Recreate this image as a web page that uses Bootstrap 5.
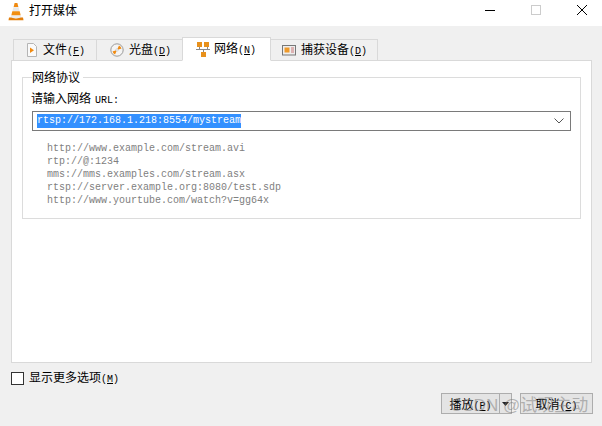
<!DOCTYPE html>
<html lang="zh">
<head>
<meta charset="utf-8">
<title>打开媒体</title>
<link rel="stylesheet" href="https://cdn.jsdelivr.net/npm/bootstrap@5.3.0/dist/css/bootstrap.min.css">
<style>
html,body{height:426px;overflow:hidden}
body{background:#f0f0f0;font-family:"Noto Sans CJK SC","Liberation Sans",sans-serif;font-size:12px;line-height:16px;color:#000;position:relative}
.mono{font-family:"Liberation Mono","Noto Sans CJK SC",monospace;font-size:10px}
.acc{text-decoration:underline}
.titlebar{height:26px;background:#fff;padding-bottom:6px}
.titlebar .ttl{margin-left:29px;font-size:12px}
.cone{position:absolute;left:8px;top:2px}
.winbtns{margin-right:-3px}
.winbtn{width:46px;height:20px}
.shell{padding:11px 10px 0 11px}
.tabbar{padding-left:2px;height:24px;border:0;margin-bottom:-1px;position:relative;z-index:1}
.tabbar .nav-link{height:22px;margin:2px 0 0 -1px;padding:0;border:1px solid #d9d9d9;border-radius:0;background:#f0f0f0;color:#000;font-size:12px;display:flex;align-items:center;gap:5px}
.tabbar .nav-item:first-child .nav-link{margin-left:0}
.tabbar .nav-link.active{height:24px;margin-top:0;background:#fff;border-color:#d9d9d9;border-bottom-color:#fff;z-index:2;position:relative;gap:4px}
.tabbar .t1{width:84px;padding-left:12px}
.tabbar .t2{width:87px;padding-left:13px}
.tabbar .t3{width:89px;padding-left:13px}
.tabbar .t4{width:108px;padding-left:11px}
.pane{height:303px;background:#fff;border:1px solid #d9d9d9;padding:8px 10px 0 10px}
.grp{height:150px;border:1px solid #dcdcdc;margin:0;padding:0 9px;min-width:0}
.grp legend{float:none;width:auto;font-size:12px;line-height:16px;margin:0;padding:0 3px 0 0;background:#fff;height:16px}
.urllabel{margin-top:5px;height:16px;margin-left:-1px}
.urlpart{margin-left:4px}
.combo{height:20px;border:1px solid #7a7a7a;margin:5px 0 0 0;padding:0 6px 0 4px;width:539px}
.sel{background:#3390ff;color:#fff;line-height:14px;height:14px;font-size:10px}
.ex{margin:11px 0 0 15px;color:#808080;line-height:13px}
.foot{margin-top:9px;height:13px;min-height:0;margin-bottom:0}
.cb{width:13px;height:13px;border:1px solid #333;background:#fff;border-radius:0;margin:0;flex:none;appearance:none;-webkit-appearance:none}
.gap-cb{gap:5px}
.actions{position:absolute;top:393px;left:441px;gap:8px}
.vbtn{height:21px;background:#e4e4e4;border:1px solid #adadad;border-radius:0;padding:0;font-size:12px;line-height:19px;color:#000;width:73px}
.vplay{width:71px;display:flex;padding:0}
.vplay .lbl{width:58px;text-align:center;border-right:1px solid #adadad}
.vplay .arr{flex:1;display:flex;align-items:center;justify-content:center}
.wmk{position:absolute;left:450px;top:396px;font-size:17px;line-height:20px;color:rgba(120,120,120,.5);white-space:nowrap;font-family:"Liberation Sans","Noto Sans CJK SC",sans-serif}
</style>
</head>
<body>
<div class="titlebar d-flex align-items-center justify-content-between">
  <svg class="cone" width="16" height="20" viewBox="0 0 16 20"><path d="M6.6 1h2.800l1 4H5.600z" fill="#f08a10"/><path d="M5.400 5.300h5.200l1 4H4.400z" fill="#e8e8e8"/><path d="M4.300 9.300h7.400l1 4.200H3.300z" fill="#f18f13"/><path d="M3.200 13.400h9.600l.8 2.600H2.400z" fill="#ececec"/><path d="M1 15.600h2.200c1 1.100 8.600 1.100 9.600 0H15l.5 2.600H.5z" fill="#e37f0c"/></svg>
  <span class="ttl">打开媒体</span>
  <div class="d-flex ms-auto winbtns">
    <div class="winbtn d-flex align-items-center justify-content-center"><svg width="12" height="12"><path d="M1 6.500h10" stroke="#000"/></svg></div>
    <div class="winbtn d-flex align-items-center justify-content-center"><svg width="12" height="12"><rect x="1.500" y="1.500" width="9" height="9" fill="none" stroke="#ccc"/></svg></div>
    <div class="winbtn d-flex align-items-center justify-content-center"><svg width="12" height="12"><path d="M1 1l10 10M11 1L1 11" stroke="#000"/></svg></div>
  </div>
</div>
<div class="shell">
  <ul class="nav nav-tabs tabbar flex-nowrap">
    <li class="nav-item"><a class="nav-link t1" href="#"><svg width="12" height="14" viewBox="0 0 12 14"><path d="M1.500.500h6l3 3v10h-9z" fill="#fafafa" stroke="#b5b5b5"/><path d="M4 4.500l4 2.700-4 2.700z" fill="#f18a10"/></svg><span>文件<span class="mono">(<span class="acc">F</span>)</span></span></a></li>
    <li class="nav-item"><a class="nav-link t2" href="#"><svg width="14" height="14" viewBox="0 0 14 14"><circle cx="7" cy="7" r="6.200" fill="#f4f4f4" stroke="#999"/><path d="M7 7L2.500 8.500A5 5 0 0 0 5 11.500zM7 7l4.500-1.500A5 5 0 0 0 9 2.500z" fill="#f08a10"/><circle cx="7" cy="7" r="1.200" fill="#fff" stroke="#aaa" stroke-width=".5"/></svg><span>光盘<span class="mono">(<span class="acc">D</span>)</span></span></a></li>
    <li class="nav-item"><a class="nav-link t3 active" href="#"><svg width="14" height="16" viewBox="0 0 14 16"><rect x="1" y="1" width="5" height="5" fill="#e8911c"/><rect x="8" y="1" width="5" height="5" fill="#e8911c"/><rect x="5" y="11" width="5" height="5" fill="#e8911c"/><path d="M3.500 6v2.500h8V6M7.500 8.500V11M0 8.500h14" stroke="#8a8a8a" fill="none"/></svg><span>网络<span class="mono">(<span class="acc">N</span>)</span></span></a></li>
    <li class="nav-item"><a class="nav-link t4" href="#"><svg width="14" height="13" viewBox="0 0 14 13"><rect x=".5" y="1.500" width="13" height="9.500" fill="#eee" stroke="#777"/><rect x="2.500" y="3.500" width="5" height="5" fill="#ef9a2a"/><path d="M9 4h3M9 6h3M9 8h3" stroke="#c77"/></svg><span>捕获设备<span class="mono">(<span class="acc">D</span>)</span></span></a></li>
  </ul>
  <div class="pane">
    <fieldset class="grp">
      <legend>网络协议</legend>
      <div class="urllabel">请输入网络<span class="mono urlpart">URL:</span></div>
      <div class="combo d-flex align-items-center justify-content-between">
        <span class="sel mono">rtsp://172.168.1.218:8554/mystream</span>
        <svg width="10" height="6" viewBox="0 0 10 6"><path d="M.5.500L5 5 9.500.500" fill="none" stroke="#555"/></svg>
      </div>
      <div class="ex mono">http://www.example.com/stream.avi<br>rtp://@:1234<br>mms://mms.examples.com/stream.asx<br>rtsp://server.example.org:8080/test.sdp<br>http://www.yourtube.com/watch?v=gg64x</div>
    </fieldset>
  </div>
  <div class="foot d-flex align-items-center gap-cb form-check p-0">
    <input class="cb" type="checkbox" aria-label="显示更多选项">
    <span>显示更多选项<span class="mono">(<span class="acc">M</span>)</span></span>
  </div>
</div>
<div class="actions d-flex">
  <div class="btn vbtn vplay"><span class="lbl">播放<span class="mono">(<span class="acc">P</span>)</span></span><span class="arr"><svg width="7" height="4" viewBox="0 0 7 4"><path d="M0 0h7L3.500 4z" fill="#222"/></svg></span></div>
  <button class="btn vbtn" type="button">取消<span class="mono">(<span class="acc">C</span>)</span></button>
</div>
<div class="wmk">CSDN @试现主动</div>
<script src="https://cdn.jsdelivr.net/npm/bootstrap@5.3.0/dist/js/bootstrap.bundle.min.js"></script>
</body>
</html>
